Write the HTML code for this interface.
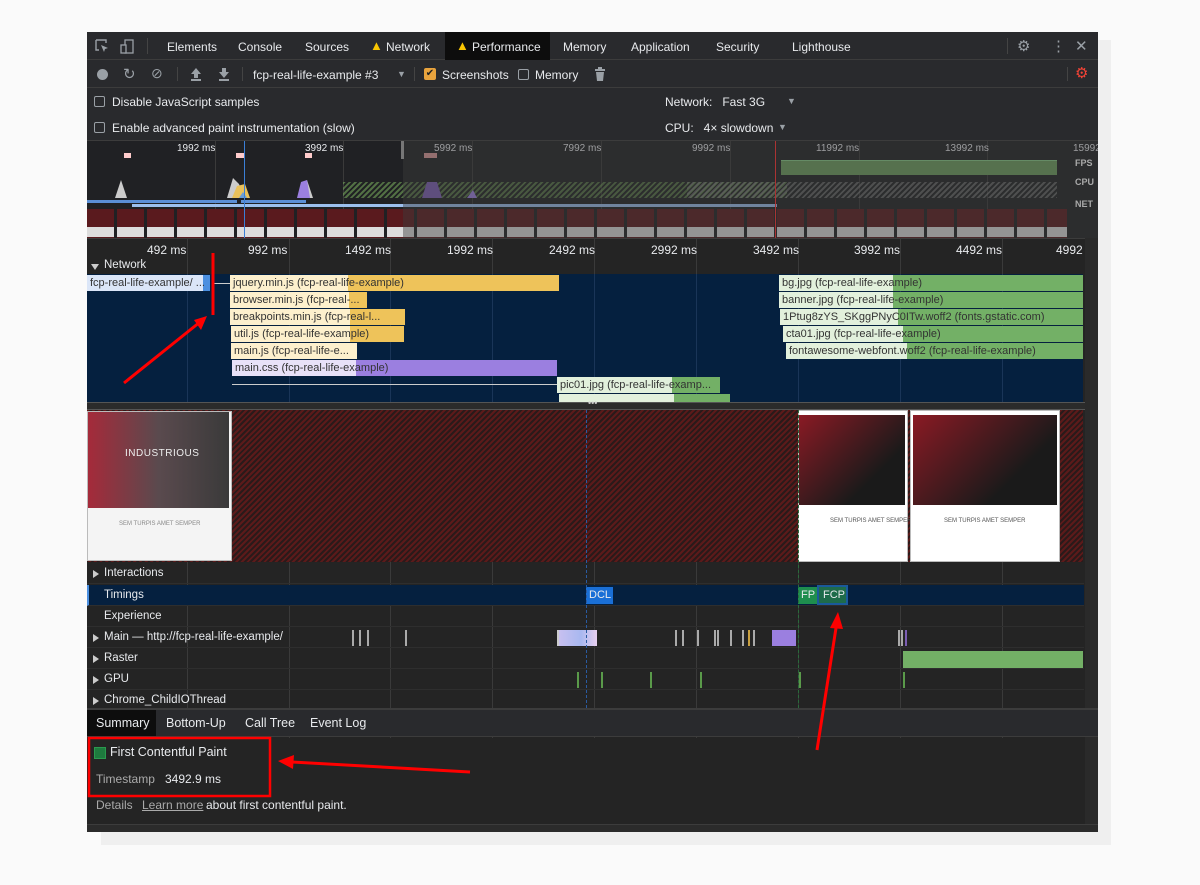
<!DOCTYPE html>
<html><head><meta charset="utf-8">
<style>
*{box-sizing:border-box;margin:0;padding:0}
body{width:1200px;height:885px;background:#fafafa;position:relative;overflow:hidden;font-family:"Liberation Sans",sans-serif;font-size:12px;color:#e8eaed}
.a{position:absolute}
.t{position:absolute;white-space:nowrap}
.vl{position:absolute;width:1px;background:#3a3a3a}
.bar{position:absolute;height:16px;font-size:11px;line-height:16px;padding-left:3px;color:#333;white-space:nowrap;overflow:hidden}
.cb{position:absolute;width:11px;height:11px;border:1px solid #9aa0a6;border-radius:2px}
.row{position:absolute;left:0;width:997px;height:21px;border-bottom:1px solid #2e2e2e}
.row span{position:absolute;top:4px;font-size:11.5px;color:#e8eaed}
.tri{position:absolute;top:7px;left:6px;width:0;height:0;border-left:6px solid #ccc;border-top:4px solid transparent;border-bottom:4px solid transparent}
.mk{position:absolute;width:2px;background:#aaa}
</style></head><body>
<div class="a" style="left:101px;top:40px;width:1010px;height:805px;background:#efefef"></div>
<div class="a" style="left:87px;top:32px;width:1011px;height:800px;background:#242424;overflow:hidden">
 <div class="a" style="left:0;top:0;width:1011px;height:28px;background:#292a2d;border-bottom:1px solid #3c3c3c"></div>
 <svg class="a" style="left:8px;top:7px" width="40" height="16" viewBox="0 0 40 16"><path d="M1 1h10v3M1 1v10h3" stroke="#9aa0a6" fill="none" stroke-width="1.4"/><path d="M6 6l7 3-3 1-1 3z" fill="#9aa0a6"/><rect x="30" y="1" width="8" height="13" stroke="#9aa0a6" fill="none" stroke-width="1.3"/><rect x="26" y="6" width="5" height="8" stroke="#9aa0a6" fill="#292a2d" stroke-width="1.3"/></svg>
 <div class="a" style="left:60px;top:6px;width:1px;height:16px;background:#444"></div>
 <span class="t" style="left:80px;top:8px">Elements</span>
 <span class="t" style="left:151px;top:8px">Console</span>
 <span class="t" style="left:218px;top:8px">Sources</span>
 <span class="t" style="left:283px;top:6px;color:#f9c602;font-size:13px">▲</span><span class="t" style="left:299px;top:8px">Network</span>
 <div class="a" style="left:358px;top:0;width:105px;height:28px;background:#0d0d0d"></div>
 <span class="t" style="left:369px;top:6px;color:#f9c602;font-size:13px">▲</span><span class="t" style="left:385px;top:8px">Performance</span>
 <span class="t" style="left:476px;top:8px">Memory</span>
 <span class="t" style="left:544px;top:8px">Application</span>
 <span class="t" style="left:629px;top:8px">Security</span>
 <span class="t" style="left:705px;top:8px">Lighthouse</span>
 <div class="a" style="left:920px;top:6px;width:1px;height:16px;background:#444"></div>
 <span class="t" style="left:930px;top:5px;font-size:15px;color:#9aa0a6">⚙</span>
 <span class="t" style="left:964px;top:5px;font-size:15px;color:#9aa0a6">⋮</span>
 <span class="t" style="left:988px;top:5px;font-size:15px;color:#9aa0a6">✕</span>
 <div class="a" style="left:0;top:28px;width:1011px;height:28px;background:#292a2d;border-bottom:1px solid #3c3c3c"></div>
 <div class="a" style="left:10px;top:37px;width:11px;height:11px;border-radius:50%;background:#9aa0a6"></div>
 <span class="t" style="left:36px;top:33px;font-size:15px;color:#9aa0a6">↻</span>
 <span class="t" style="left:64px;top:33px;font-size:14px;color:#9aa0a6">⊘</span>
 <div class="a" style="left:90px;top:35px;width:1px;height:14px;background:#444"></div>
 <svg class="a" style="left:103px;top:35px" width="12" height="14"><path d="M6 1L1 7h3v4h4V7h3z M1 12h10v2H1z" fill="#9aa0a6"/></svg>
 <svg class="a" style="left:131px;top:35px" width="12" height="14"><path d="M6 11L1 5h3V1h4v4h3z M1 12h10v2H1z" fill="#9aa0a6"/></svg>
 <div class="a" style="left:155px;top:35px;width:1px;height:14px;background:#444"></div>
 <span class="t" style="left:166px;top:36px">fcp-real-life-example #3</span>
 <span class="t" style="left:310px;top:37px;font-size:9px;color:#9aa0a6">▼</span>
 <div class="a" style="left:327px;top:35px;width:1px;height:14px;background:#444"></div>
 <div class="a" style="left:337px;top:36px;width:12px;height:12px;background:#e8a33d;border-radius:2px;color:#222;font-size:10px;line-height:12px;text-align:center">✔</div>
 <span class="t" style="left:355px;top:36px">Screenshots</span>
 <div class="cb" style="left:431px;top:37px"></div>
 <span class="t" style="left:448px;top:36px">Memory</span>
 <svg class="a" style="left:508px;top:35px" width="10" height="14"><path d="M0 2h10v2H0z M3 0h4v2H3z M1 5h8l-1 9H2z" fill="#9aa0a6"/></svg>
 <div class="a" style="left:980px;top:35px;width:1px;height:14px;background:#444"></div>
 <span class="t" style="left:988px;top:32px;font-size:15px;color:#f44336">⚙</span>
 <div class="a" style="left:0;top:56px;width:1011px;height:53px;background:#292a2d;border-bottom:1px solid #3c3c3c"></div>
 <div class="cb" style="left:7px;top:64px"></div><span class="t" style="left:25px;top:63px">Disable JavaScript samples</span>
 <div class="cb" style="left:7px;top:90px"></div><span class="t" style="left:25px;top:89px">Enable advanced paint instrumentation (slow)</span>
 <span class="t" style="left:578px;top:63px">Network:&nbsp;&nbsp; Fast 3G</span><span class="t" style="left:700px;top:64px;font-size:9px;color:#9aa0a6">▼</span>
 <span class="t" style="left:578px;top:89px">CPU:&nbsp;&nbsp; 4× slowdown</span><span class="t" style="left:691px;top:90px;font-size:9px;color:#9aa0a6">▼</span>
 <div class="a" style="left:0;top:109px;width:1011px;height:97px;background:#202124"></div>
 <div class="vl" style="left:128px;top:109px;height:97px"></div><div class="vl" style="left:256px;top:109px;height:97px"></div><div class="vl" style="left:385px;top:109px;height:97px"></div><div class="vl" style="left:514px;top:109px;height:97px"></div><div class="vl" style="left:643px;top:109px;height:97px"></div><div class="vl" style="left:772px;top:109px;height:97px"></div><div class="vl" style="left:900px;top:109px;height:97px"></div>
 <span class="t" style="left:90px;top:111px;font-size:10px">1992 ms</span>
 <span class="t" style="left:218px;top:111px;font-size:10px">3992 ms</span>
 <span class="t" style="left:347px;top:111px;font-size:10px">5992 ms</span>
 <span class="t" style="left:476px;top:111px;font-size:10px">7992 ms</span>
 <span class="t" style="left:605px;top:111px;font-size:10px">9992 ms</span>
 <span class="t" style="left:729px;top:111px;font-size:10px">11992 ms</span>
 <span class="t" style="left:858px;top:111px;font-size:10px">13992 ms</span>
 <span class="t" style="left:986px;top:111px;font-size:10px">15992</span>
 <div class="a" style="left:37px;top:121px;width:7px;height:5px;background:#fcc"></div>
 <div class="a" style="left:149px;top:121px;width:8px;height:5px;background:#fcc"></div>
 <div class="a" style="left:218px;top:121px;width:7px;height:5px;background:#fcc"></div>
 <div class="a" style="left:337px;top:121px;width:13px;height:5px;background:#d99"></div>
 <div class="a" style="left:256px;top:150px;width:444px;height:16px;background:repeating-linear-gradient(135deg,#7ab05e 0 2px,transparent 2px 4px);opacity:.55"></div>
 <div class="a" style="left:600px;top:150px;width:370px;height:16px;background:repeating-linear-gradient(135deg,#888 0 2px,transparent 2px 4px);opacity:.6"></div>
 <svg class="a" style="left:0;top:138px" width="1011" height="30"><path d="M28 28L34 10 40 28Z M140 28L146 8 152 14 158 28Z M214 28L220 10 226 28Z" fill="#ccc"/><path d="M145 28L150 16 158 14 163 28Z" fill="#e9c15a"/><path d="M152 28L156 22 160 28Z" fill="#6a9ed8"/><path d="M210 28L214 12 220 10 223 28Z" fill="#9b7fe0"/><path d="M335 28L340 12 350 12 355 28Z" fill="#7b5db3"/><path d="M380 28L386 20 390 28Z" fill="#9b7fe0"/></svg>
 <div class="a" style="left:694px;top:128px;width:276px;height:15px;background:#6c9d5e;border-top:1px solid #8c8"></div>
 <div class="a" style="left:0;top:168px;width:150px;height:3px;background:#5b8fd6"></div>
 <div class="a" style="left:154px;top:168px;width:65px;height:3px;background:#5b8fd6"></div>
 <div class="a" style="left:45px;top:172px;width:645px;height:3px;background:#9cc0ee"></div>
 <div class="a" style="left:0;top:177px;width:980px;height:29px;background:repeating-linear-gradient(90deg,#5a1a1e 0 27px,transparent 27px 30px)"></div>
 <div class="a" style="left:0;top:195px;width:980px;height:10px;background:repeating-linear-gradient(90deg,#ddd 0 27px,transparent 27px 30px)"></div>
 <div class="a" style="left:316px;top:109px;width:695px;height:97px;background:rgba(60,60,60,.45)"></div>
 <div class="a" style="left:314px;top:109px;width:3px;height:18px;background:#777"></div>
 <div class="a" style="left:157px;top:109px;width:1px;height:97px;background:#3b7fd6"></div>
 <div class="a" style="left:688px;top:109px;width:1px;height:97px;background:#a33"></div>
 <span class="t" style="left:988px;top:126px;font-size:9px;font-weight:bold;color:#aaa">FPS</span>
 <span class="t" style="left:988px;top:145px;font-size:9px;font-weight:bold;color:#aaa">CPU</span>
 <span class="t" style="left:988px;top:167px;font-size:9px;font-weight:bold;color:#aaa">NET</span>
 <div class="a" style="left:0;top:206px;width:1011px;height:20px;background:#242424;border-top:1px solid #3c3c3c"></div>
 <div class="vl" style="left:100px;top:206px;height:500px"></div><div class="vl" style="left:202px;top:206px;height:500px"></div><div class="vl" style="left:303px;top:206px;height:500px"></div><div class="vl" style="left:405px;top:206px;height:500px"></div><div class="vl" style="left:507px;top:206px;height:500px"></div><div class="vl" style="left:609px;top:206px;height:500px"></div><div class="vl" style="left:711px;top:206px;height:500px"></div><div class="vl" style="left:813px;top:206px;height:500px"></div><div class="vl" style="left:915px;top:206px;height:500px"></div>
 <span class="t" style="left:60px;top:211px">492 ms</span><span class="t" style="left:161px;top:211px">992 ms</span><span class="t" style="left:258px;top:211px">1492 ms</span><span class="t" style="left:360px;top:211px">1992 ms</span><span class="t" style="left:462px;top:211px">2492 ms</span><span class="t" style="left:564px;top:211px">2992 ms</span><span class="t" style="left:666px;top:211px">3492 ms</span><span class="t" style="left:767px;top:211px">3992 ms</span><span class="t" style="left:869px;top:211px">4492 ms</span><span class="t" style="left:969px;top:211px">4992</span>
 <div class="a" style="left:998px;top:206px;width:13px;height:596px;background:#2a2a2a"></div>
 <div class="tri" style="top:232px;left:4px;border-left:none;border-top:6px solid #ccc;border-left:4px solid transparent;border-right:4px solid transparent"></div>
 <span class="t" style="left:17px;top:227px;font-size:11.5px">Network</span>
 <div class="a" style="left:0;top:242px;width:996px;height:128px;background:#05203f"></div>
 <div class="vl" style="left:100px;top:242px;height:128px;background:#1a3558"></div><div class="vl" style="left:202px;top:242px;height:128px;background:#1a3558"></div><div class="vl" style="left:303px;top:242px;height:128px;background:#1a3558"></div><div class="vl" style="left:405px;top:242px;height:128px;background:#1a3558"></div><div class="vl" style="left:507px;top:242px;height:128px;background:#1a3558"></div><div class="vl" style="left:609px;top:242px;height:128px;background:#1a3558"></div><div class="vl" style="left:711px;top:242px;height:128px;background:#1a3558"></div><div class="vl" style="left:813px;top:242px;height:128px;background:#1a3558"></div><div class="vl" style="left:915px;top:242px;height:128px;background:#1a3558"></div>
 <div class="bar" style="left:0;top:243px;width:123px;background:linear-gradient(90deg,#dbe6f8 116px,#4b8fe0 116px)">fcp-real-life-example/ ...</div>
 <div class="a" style="left:127px;top:251px;width:16px;height:1px;background:#ccc"></div>
 <div class="bar" style="left:143px;top:243px;width:329px;background:linear-gradient(90deg,#fdf0cd 118px,#eec35a 118px)">jquery.min.js (fcp-real-life-example)</div>
 <div class="bar" style="left:143px;top:260px;width:137px;background:linear-gradient(90deg,#fdf0cd 119px,#eec35a 119px)">browser.min.js (fcp-real-...</div>
 <div class="bar" style="left:143px;top:277px;width:175px;background:linear-gradient(90deg,#fdf0cd 120px,#eec35a 120px)">breakpoints.min.js (fcp-real-l...</div>
 <div class="bar" style="left:144px;top:294px;width:173px;background:linear-gradient(90deg,#fdf0cd 119px,#eec35a 119px)">util.js (fcp-real-life-example)</div>
 <div class="bar" style="left:144px;top:311px;width:126px;background:#fdf0cd">main.js (fcp-real-life-e...</div>
 <div class="bar" style="left:145px;top:328px;width:325px;background:linear-gradient(90deg,#e8e1f8 124px,#9b7fe0 124px)">main.css (fcp-real-life-example)</div>
 <div class="a" style="left:145px;top:352px;width:325px;height:1px;background:#ccc"></div>
 <div class="bar" style="left:470px;top:345px;width:163px;background:linear-gradient(90deg,#e2f0dc 115px,#73b066 115px)">pic01.jpg (fcp-real-life-examp...</div>
 <div class="bar" style="left:472px;top:362px;width:171px;height:8px;background:linear-gradient(90deg,#e2f0dc 115px,#73b066 115px)"></div>
 <div class="bar" style="left:692px;top:243px;width:304px;background:linear-gradient(90deg,#e2f0dc 114px,#73b066 114px)">bg.jpg (fcp-real-life-example)</div>
 <div class="bar" style="left:692px;top:260px;width:304px;background:linear-gradient(90deg,#e2f0dc 114px,#73b066 114px)">banner.jpg (fcp-real-life-example)</div>
 <div class="bar" style="left:693px;top:277px;width:303px;background:linear-gradient(90deg,#e2f0dc 118px,#73b066 118px)">1Ptug8zYS_SKggPNyC0ITw.woff2 (fonts.gstatic.com)</div>
 <div class="bar" style="left:696px;top:294px;width:300px;background:linear-gradient(90deg,#e2f0dc 120px,#73b066 120px)">cta01.jpg (fcp-real-life-example)</div>
 <div class="bar" style="left:699px;top:311px;width:297px;background:linear-gradient(90deg,#e2f0dc 121px,#73b066 121px)">fontawesome-webfont.woff2 (fcp-real-life-example)</div>
 <div class="a" style="left:0;top:370px;width:998px;height:8px;background:#2b2b2b;border-top:1px solid #555;border-bottom:1px solid #555"></div>
 <span class="t" style="left:501px;top:366px;font-size:9px;color:#ccc">•••</span>
 <div class="a" style="left:0;top:378px;width:996px;height:152px;background:repeating-linear-gradient(135deg,#5c1a1a 0 2px,#2a1a1a 2px 4px)"></div>
 <div class="a" style="left:0;top:379px;width:145px;height:150px;background:#f4f4f4;border:1px solid #bbb"></div>
 <div class="a" style="left:1px;top:380px;width:141px;height:96px;background:linear-gradient(90deg,#a52a3a,#5a4a4e 50%,#3a3a3a)"></div>
 <span class="t" style="left:38px;top:416px;font-size:10px;color:#eee;letter-spacing:.5px">INDUSTRIOUS</span>
 <span class="t" style="left:32px;top:489px;font-size:6px;color:#888">SEM TURPIS AMET SEMPER</span>
 <div class="a" style="left:711px;top:378px;width:110px;height:152px;background:#fff;border:1px solid #bbb"></div>
 <div class="a" style="left:712px;top:383px;width:106px;height:90px;background:linear-gradient(135deg,#8a1a24,#1a1a1a 70%)"></div>
 <span class="t" style="left:743px;top:486px;font-size:6px;color:#555">SEM TURPIS AMET SEMPER</span>
 <div class="a" style="left:823px;top:378px;width:150px;height:152px;background:#fff;border:1px solid #bbb"></div>
 <div class="a" style="left:826px;top:383px;width:144px;height:90px;background:linear-gradient(135deg,#8a1a24,#1a1a1a 70%)"></div>
 <span class="t" style="left:857px;top:486px;font-size:6px;color:#555">SEM TURPIS AMET SEMPER</span>
 <div class="row" style="top:531px"><div class="tri"></div><span style="left:17px">Interactions</span></div>
 <div class="row" style="top:553px;background:#05203f;border-left:2px solid #4b8fe0"><span style="left:15px">Timings</span></div>
 <div class="a" style="left:499px;top:555px;width:27px;height:17px;background:#1a6fd6;font-size:11px;line-height:17px;padding-left:3px">DCL</div>
 <div class="a" style="left:711px;top:555px;width:19px;height:17px;background:#1e8e4e;font-size:11px;line-height:17px;padding-left:3px">FP</div>
 <div class="a" style="left:730px;top:553px;width:31px;height:20px;background:#1e6b4a;border:2px solid #1a5a9a;font-size:11px;line-height:16px;padding-left:4px">FCP</div>
 <div class="row" style="top:574px"><span style="left:17px">Experience</span></div>
 <div class="row" style="top:595px"><div class="tri"></div><span style="left:17px">Main — http://fcp-real-life-example/</span></div>
 <div class="mk" style="left:265px;top:598px;height:16px"></div><div class="mk" style="left:272px;top:598px;height:16px"></div><div class="mk" style="left:280px;top:598px;height:16px"></div><div class="mk" style="left:318px;top:598px;height:16px"></div>
 <div class="a" style="left:470px;top:598px;width:40px;height:16px;background:linear-gradient(90deg,#ccc 2px,#c8c0f0 2px,#a8b8f0 60%,#e9d0f0)"></div>
 <div class="mk" style="left:588px;top:598px;height:16px"></div><div class="mk" style="left:595px;top:598px;height:16px"></div><div class="mk" style="left:610px;top:598px;height:16px"></div><div class="mk" style="left:627px;top:598px;height:16px"></div><div class="mk" style="left:630px;top:598px;height:16px"></div><div class="mk" style="left:643px;top:598px;height:16px"></div><div class="mk" style="left:655px;top:598px;height:16px"></div><div class="mk" style="left:661px;top:598px;height:16px;background:#c9a040"></div><div class="mk" style="left:666px;top:598px;height:16px"></div>
 <div class="a" style="left:685px;top:598px;width:24px;height:16px;background:#9b7fe0"></div>
 <div class="mk" style="left:811px;top:598px;height:16px"></div><div class="mk" style="left:814px;top:598px;height:16px"></div><div class="mk" style="left:818px;top:598px;height:16px;background:#7b5db3"></div>
 <div class="row" style="top:616px"><div class="tri"></div><span style="left:17px">Raster</span></div>
 <div class="a" style="left:816px;top:619px;width:180px;height:17px;background:#73b066"></div>
 <div class="row" style="top:637px"><div class="tri"></div><span style="left:17px">GPU</span></div>
 <div class="mk" style="left:490px;top:640px;height:16px;background:#5a9a4a"></div><div class="mk" style="left:514px;top:640px;height:16px;background:#5a9a4a"></div><div class="mk" style="left:563px;top:640px;height:16px;background:#5a9a4a"></div><div class="mk" style="left:613px;top:640px;height:16px;background:#5a9a4a"></div><div class="mk" style="left:712px;top:640px;height:16px;background:#5a9a4a"></div><div class="mk" style="left:816px;top:640px;height:16px;background:#5a9a4a"></div>
 <div class="row" style="top:658px;border:none"><div class="tri"></div><span style="left:17px">Chrome_ChildIOThread</span></div>
 <div class="a" style="left:499px;top:378px;width:0;height:298px;border-left:1px dashed #2a5aa0"></div>
 <div class="a" style="left:711px;top:378px;width:0;height:298px;border-left:1px dashed #2a6a3a"></div>
 <div class="a" style="left:0;top:676px;width:1011px;height:29px;background:#292a2d;border-top:2px solid #3c3c3c;border-bottom:1px solid #3c3c3c"></div>
 <div class="a" style="left:0;top:678px;width:69px;height:26px;background:#0d0d0d"></div>
 <span class="t" style="left:9px;top:684px;font-size:12.5px">Summary</span>
 <span class="t" style="left:79px;top:684px;font-size:12.5px">Bottom-Up</span>
 <span class="t" style="left:158px;top:684px;font-size:12.5px">Call Tree</span>
 <span class="t" style="left:223px;top:684px;font-size:12.5px">Event Log</span>
 <div class="a" style="left:7px;top:715px;width:12px;height:12px;background:#1e7a3e;border:1px solid #2a9a4e"></div>
 <span class="t" style="left:23px;top:713px;font-size:12.5px">First Contentful Paint</span>
 <span class="t" style="left:9px;top:740px;color:#aaa">Timestamp</span><span class="t" style="left:78px;top:740px">3492.9 ms</span>
 <span class="t" style="left:9px;top:766px;color:#aaa">Details</span><span class="t" style="left:55px;top:766px;color:#aaa;text-decoration:underline">Learn more</span><span class="t" style="left:119px;top:766px">about first contentful paint.</span>
 <div class="a" style="left:0;top:792px;width:1011px;height:8px;background:#2b2b2b;border-top:1px solid #3c3c3c"></div>
</div>
<svg class="a" style="left:0;top:0" width="1200" height="885">
 <g stroke="#f00" stroke-width="3" fill="none">
  <line x1="213" y1="253" x2="213" y2="315"/>
  <line x1="124" y1="383" x2="200" y2="322"/>
  <rect x="89" y="738" width="181" height="58" stroke-width="2.5"/>
  <line x1="470" y1="772" x2="292" y2="762"/>
  <line x1="817" y1="750" x2="836" y2="628"/>
 </g>
 <g fill="#f00">
  <path d="M207 316L194 320 201 330Z"/>
  <path d="M278 761L294 755 293 769Z"/>
  <path d="M838 612L830 628 843 629Z"/>
 </g>
</svg>
</body></html>
